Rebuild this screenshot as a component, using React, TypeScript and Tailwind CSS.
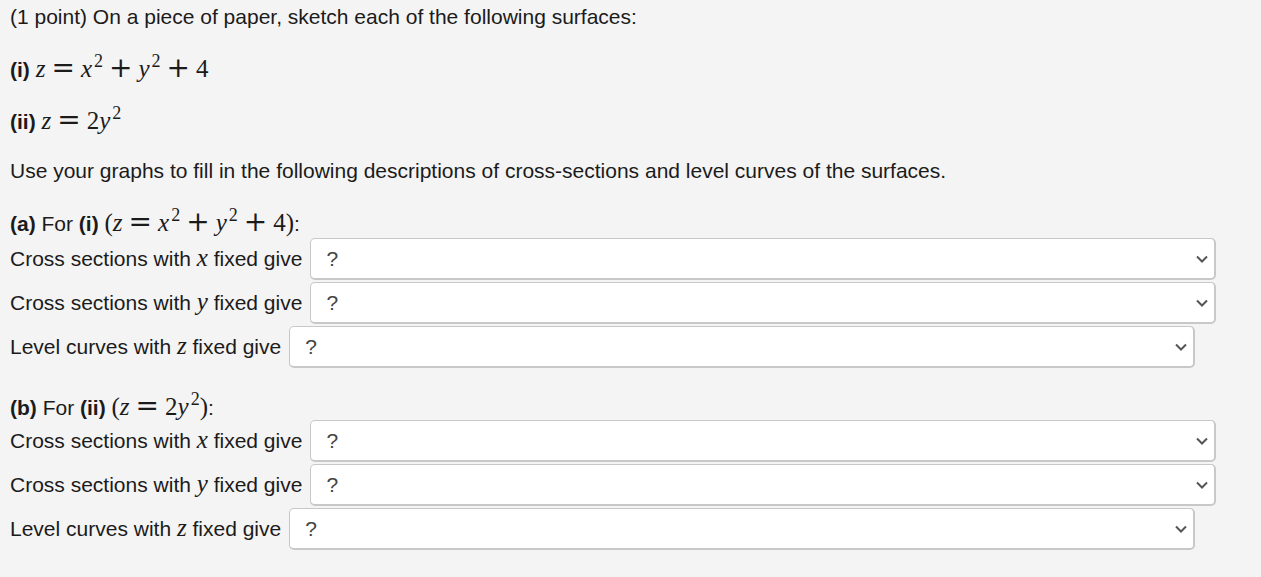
import React from "react";

const M = ({ children }: { children: React.ReactNode }) => (
  <span className="text-[25px] leading-[26px]" style={{ fontFamily: '"Liberation Serif", "DejaVu Serif", serif' }}>{children}</span>
);
const V = ({ children }: { children: React.ReactNode }) => (
  <span className="italic" style={{ fontStyle: "italic" }}>{children}</span>
);
const Sup = ({ children }: { children: React.ReactNode }) => (
  <span className="text-[18px] relative -top-[10px] ml-[2px]">{children}</span>
);
const Op = ({ children }: { children: React.ReactNode }) => (
  <span className="mx-[6px] text-[28px] leading-[26px]" style={{ fontFamily: '"DejaVu Serif", serif' }}>{children}</span>
);

const Chevron = () => (
  <svg width="12" height="8" viewBox="0 0 12 8" className="shrink-0">
    <path d="M1 1.5 L6 6.5 L11 1.5" fill="none" stroke="#555" strokeWidth="2" />
  </svg>
);

const Sel = () => (
  <div className="w-[906px] h-[42px] bg-white border border-[#c8c8c8] border-b-2 border-r-2 rounded-[5px] flex items-center justify-between pl-[15px] pr-[6px] text-[#444]">
    <span>?</span>
    <Chevron />
  </div>
);

const Row = ({ label }: { label: React.ReactNode }) => (
  <div className="flex items-center h-[44px]">
    <span className="mr-[8px] whitespace-nowrap">{label}</span>
    <Sel />
  </div>
);

export default function App() {
  return (
    <div
      className="w-[1261px] h-[577px] bg-[#f4f4f4] text-[#1b1b1b] text-[21px] pl-[10px] pt-[4px]"
      style={{ fontFamily: '"Liberation Sans", Arial, sans-serif' }}
    >
      <div className="h-[26px] leading-[26px]">(1 point) On a piece of paper, sketch each of the following surfaces:</div>
      <div className="h-[52px] mt-[25px] leading-[26px] whitespace-nowrap">
        <b>(i)</b>{" "}
        <M>
          <V>z</V><Op>=</Op><V>x</V><Sup>2</Sup><Op>+</Op><V>y</V><Sup>2</Sup><Op>+</Op>4
        </M>
      </div>
      <div className="h-[26px] leading-[26px] whitespace-nowrap">
        <b>(ii)</b>{" "}
        <M>
          <V>z</V><Op>=</Op>2<V>y</V><Sup>2</Sup>
        </M>
      </div>
      <div className="mt-[25px] h-[26px] leading-[26px]">
        Use your graphs to fill in the following descriptions of cross-sections and level curves of the surfaces.
      </div>
      <div className="mt-[25px] h-[26px] leading-[26px] whitespace-nowrap">
        <b>(a)</b> For <b>(i)</b>{" "}
        <M>
          (<V>z</V><Op>=</Op><V>x</V><Sup>2</Sup><Op>+</Op><V>y</V><Sup>2</Sup><Op>+</Op>4)
        </M>
        :
      </div>
      <div className="mt-[2px]">
        <Row label={<>Cross sections with <M><V>x</V></M> fixed give</>} />
        <Row label={<>Cross sections with <M><V>y</V></M> fixed give</>} />
        <Row label={<>Level curves with <M><V>z</V></M> fixed give</>} />
      </div>
      <div className="mt-[24px] h-[26px] leading-[26px] whitespace-nowrap">
        <b>(b)</b> For <b>(ii)</b>{" "}
        <M>
          (<V>z</V><Op>=</Op>2<V>y</V><Sup>2</Sup>)
        </M>
        :
      </div>
      <div>
        <Row label={<>Cross sections with <M><V>x</V></M> fixed give</>} />
        <Row label={<>Cross sections with <M><V>y</V></M> fixed give</>} />
        <Row label={<>Level curves with <M><V>z</V></M> fixed give</>} />
      </div>
    </div>
  );
}
